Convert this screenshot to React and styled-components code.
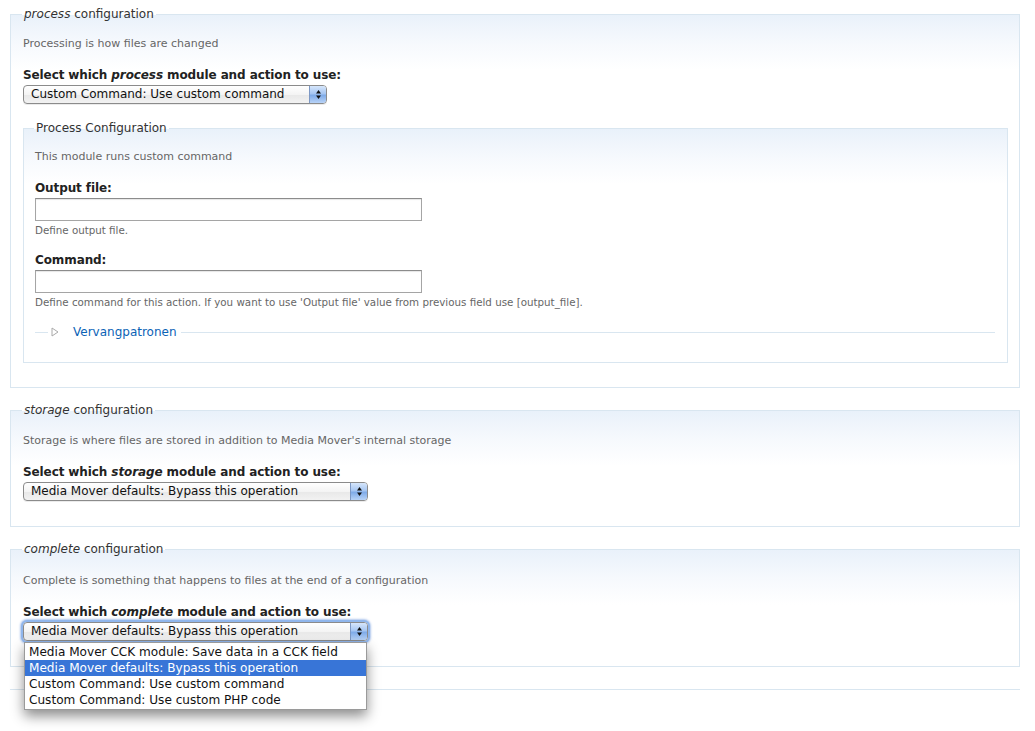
import React from 'react';
import styled, { createGlobalStyle, css } from 'styled-components';

const GlobalStyle = createGlobalStyle`
  body {
    margin: 0;
    background: #fff;
    font-family: "DejaVu Sans", Verdana, sans-serif;
    color: #222;
  }
`;

const Page = styled.div`
  min-height: 731px;
  box-sizing: border-box;
  padding: 6px 15px 0 10px;
`;

const Fieldset = styled.fieldset`
  margin: 0 0 14px 0;
  padding: 0 11px ${(p) => p.$bottom || 25}px 12px;
  border: 1px solid #d9e6f0;
  background: linear-gradient(#e9f1fa 0px, #f6f9fd 28px, #fff 55px);
  min-inline-size: auto;
  ${(p) =>
    p.$inner &&
    css`
      margin: 16px 0 0 0;
      padding: 0 12px 22px 11px;
    `}
`;

const Legend = styled.legend`
  padding: 0 2px;
  margin-left: -1px;
  font-size: 12px;
  line-height: 16px;
  color: #333;
  em {
    font-style: italic;
  }
`;

const Description = styled.div`
  margin-top: ${(p) => p.$top || 15}px;
  font-size: 11px;
  line-height: 14px;
  color: #666;
`;

const Label = styled.div`
  margin-top: ${(p) => p.$top || 16}px;
  font-size: 12px;
  line-height: 16px;
  font-weight: bold;
  color: #222;
  letter-spacing: -0.1px;
`;

const SelectWrap = styled.div`
  position: relative;
  margin-top: 2px;
  width: ${(p) => p.$width}px;
`;

const SelectBox = styled.div`
  display: flex;
  align-items: stretch;
  height: 19px;
  box-sizing: border-box;
  border: 1px solid #8b8b8b;
  border-radius: 4px;
  background: linear-gradient(#ffffff, #f4f4f4 50%, #e8e8e8 51%, #f2f2f2);
  box-shadow: 0 1px 0 rgba(0, 0, 0, 0.08);
  ${(p) =>
    p.$focused &&
    css`
      box-shadow: 0 0 0 2px #90b6ec, 0 0 2px 3px rgba(80, 130, 215, 0.45);
    `}
`;

const SelectText = styled.div`
  flex: 1;
  padding-left: 7px;
  font-size: 12px;
  line-height: 17px;
  color: #111;
  white-space: nowrap;
  overflow: hidden;
`;

const SelectButton = styled.div`
  width: 16px;
  display: flex;
  align-items: center;
  justify-content: center;
  border-left: 1px solid #7d98c4;
  border-radius: 0 3px 3px 0;
  background: linear-gradient(#d6e6fb, #a6c6f2 45%, #7fabe8 55%, #b8d3f7);
`;

const Dropdown = styled.div`
  position: absolute;
  left: 1px;
  top: 20px;
  width: 343px;
  box-sizing: border-box;
  padding: 1px 0;
  background: #fff;
  border: 1px solid #9a9a9a;
  box-shadow: 0 6px 12px rgba(0, 0, 0, 0.45);
  z-index: 5;
`;

const Option = styled.div`
  height: 16px;
  padding-left: 4px;
  font-size: 12.1px;
  line-height: 16px;
  white-space: nowrap;
  color: ${(p) => (p.$selected ? '#fff' : '#111')};
  background: ${(p) => (p.$selected ? '#3875d7' : 'transparent')};
`;

const TextInput = styled.input`
  display: block;
  margin-top: 2px;
  width: 387px;
  height: 23px;
  box-sizing: border-box;
  border: 1px solid #a5a5a5;
  border-top-color: #8c8c8c;
  background: #fff;
  box-shadow: inset 0 1px 1px rgba(0, 0, 0, 0.1);
  outline: none;
`;

const Help = styled.div`
  margin-top: 3px;
  font-size: 10.3px;
  line-height: 12px;
  color: #666;
`;

const Collapsed = styled.fieldset`
  margin: 16px 0 0 0;
  padding: 0 0 0 13px;
  border: 0;
  border-top: 1px solid #d9e6f0;
  min-inline-size: auto;
`;

const CollapsedLegend = styled.legend`
  padding: 0 4px 0 3px;
  display: flex;
  align-items: center;
  gap: 14px;
  line-height: 16px;
`;

const Toggle = styled.a`
  color: #0b63b6;
  text-decoration: none;
  font-size: 12px;
`;

const Rule = styled.div`
  margin-top: 22px;
  border-top: 1px solid #d9e6f0;
`;

const Arrows = () => (
  <svg width="7" height="11" viewBox="0 0 7 11">
    <path d="M3.5 1 L6 4.5 L1 4.5 Z" fill="#111" />
    <path d="M3.5 10 L6 6.5 L1 6.5 Z" fill="#111" />
  </svg>
);

const Triangle = () => (
  <svg width="8" height="10" viewBox="0 0 8 10">
    <path d="M1 1 L7 5 L1 9 Z" fill="none" stroke="#aaa" strokeWidth="1" />
  </svg>
);

function Select({ value, width, focused, options }) {
  return (
    <SelectWrap $width={width}>
      <SelectBox $focused={focused}>
        <SelectText>{value}</SelectText>
        <SelectButton>
          <Arrows />
        </SelectButton>
      </SelectBox>
      {options && (
        <Dropdown>
          {options.map((o) => (
            <Option key={o} $selected={o === value}>
              {o}
            </Option>
          ))}
        </Dropdown>
      )}
    </SelectWrap>
  );
}

const completeOptions = [
  'Media Mover CCK module: Save data in a CCK field',
  'Media Mover defaults: Bypass this operation',
  'Custom Command: Use custom command',
  'Custom Command: Use custom PHP code',
];

export default function App() {
  return (
    <>
      <GlobalStyle />
      <Page>
        <Fieldset $bottom={24}>
          <Legend>
            <em>process</em> configuration
          </Legend>
          <Description>Processing is how files are changed</Description>
          <Label>
            Select which <em>process</em> module and action to use:
          </Label>
          <Select value="Custom Command: Use custom command" width={304} />

          <Fieldset $inner>
            <Legend>Process Configuration</Legend>
            <Description $top={14}>This module runs custom command</Description>
            <Label>Output file:</Label>
            <TextInput type="text" />
            <Help>Define output file.</Help>
            <Label>Command:</Label>
            <TextInput type="text" />
            <Help>
              Define command for this action. If you want to use 'Output file' value from previous
              field use [output_file].
            </Help>
            <Collapsed>
              <CollapsedLegend>
                <Triangle />
                <Toggle href="#">Vervangpatronen</Toggle>
              </CollapsedLegend>
            </Collapsed>
          </Fieldset>
        </Fieldset>

        <Fieldset>
          <Legend>
            <em>storage</em> configuration
          </Legend>
          <Description $top={16}>
            Storage is where files are stored in addition to Media Mover's internal storage
          </Description>
          <Label>
            Select which <em>storage</em> module and action to use:
          </Label>
          <Select value="Media Mover defaults: Bypass this operation" width={345} />
        </Fieldset>

        <Fieldset>
          <Legend>
            <em>complete</em> configuration
          </Legend>
          <Description $top={17}>
            Complete is something that happens to files at the end of a configuration
          </Description>
          <Label>
            Select which <em>complete</em> module and action to use:
          </Label>
          <Select
            value="Media Mover defaults: Bypass this operation"
            width={345}
            focused
            options={completeOptions}
          />
        </Fieldset>
        <Rule />
      </Page>
    </>
  );
}
